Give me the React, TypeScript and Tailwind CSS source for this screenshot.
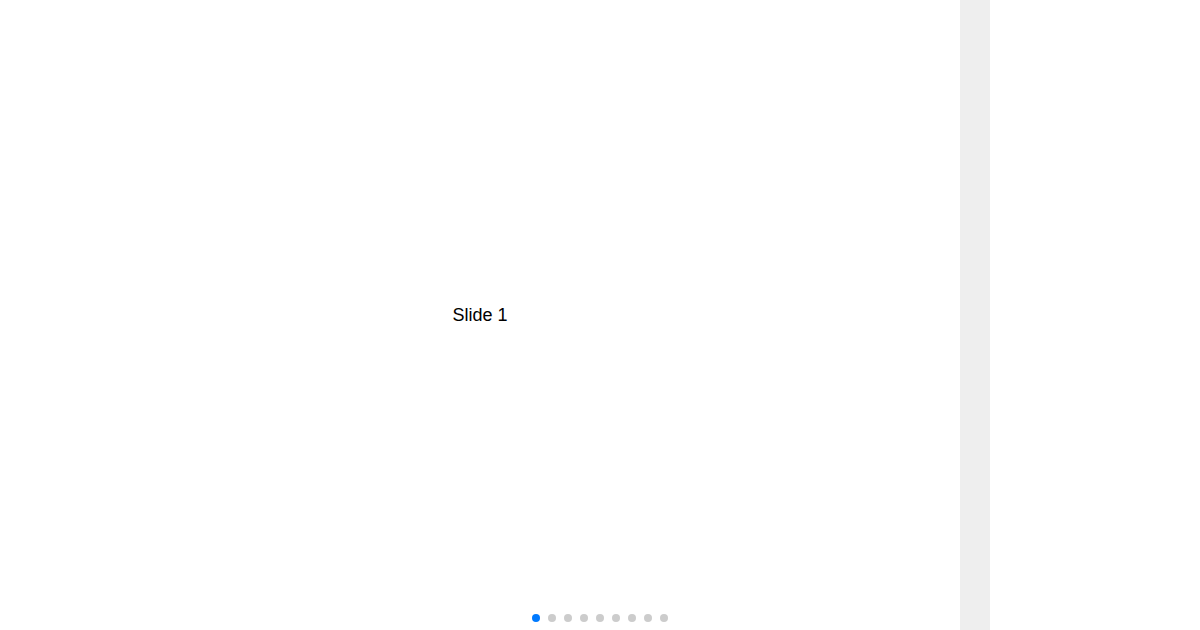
export default function App() {
  const slides = [1, 2, 3, 4, 5, 6, 7, 8, 9];

  return (
    <div
      className="relative w-[1200px] h-[630px] overflow-hidden bg-[#eeeeee]"
      style={{ fontFamily: '"Liberation Sans", Arial, sans-serif' }}
    >
      <div className="flex h-full">
        {slides.map((n) => (
          <div
            key={n}
            className="w-[960px] h-full shrink-0 mr-[30px] bg-white flex items-center justify-center text-[18px] text-black"
          >
            Slide {n}
          </div>
        ))}
      </div>

      {/* pagination */}
      <div className="absolute left-0 right-0 bottom-[8px] flex justify-center gap-[8px]">
        {slides.map((n) => (
          <span
            key={n}
            className={
              n === 1
                ? "block w-[8px] h-[8px] rounded-full bg-[#007aff]"
                : "block w-[8px] h-[8px] rounded-full bg-[#cccccc]"
            }
          />
        ))}
      </div>
    </div>
  );
}
